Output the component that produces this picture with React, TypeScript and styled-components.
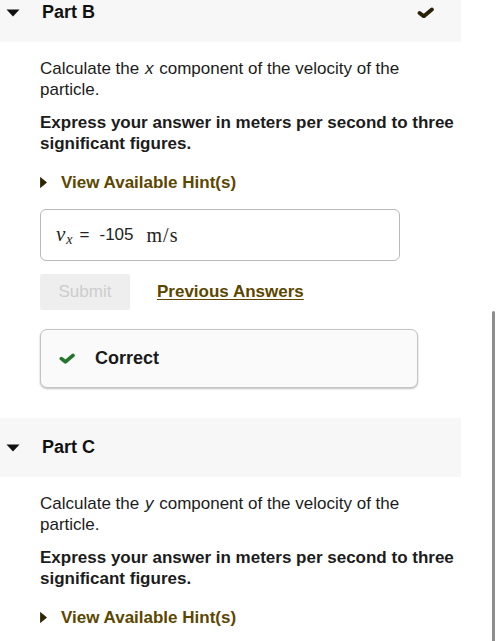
import React from "react";
import styled, { createGlobalStyle } from "styled-components";

const Global = createGlobalStyle`
  html, body { margin: 0; padding: 0; background: #fff; }
  body { font-family: "Liberation Sans", Arial, Helvetica, sans-serif; color: #1a1a1a; overflow: hidden; }
`;

const Page = styled.div`
  width: 461px;
  margin-top: -17px;
`;

const Section = styled.section`
  display: flex;
  flex-direction: column;
`;

const PartHeader = styled.div`
  height: 59px;
  background: #f7f7f7;
  display: flex;
  align-items: center;
  padding: 0 27px 0 6px;
  box-sizing: border-box;
`;

const Caret = styled.svg`
  width: 14px;
  height: 8px;
  flex: none;
`;

const PartTitle = styled.h2`
  margin: 0 0 0 22px;
  font-size: 18px;
  font-weight: bold;
  color: #111;
  flex: 1;
`;

const Body = styled.div`
  padding: 17px 0 30px 40px;
  display: flex;
  flex-direction: column;
  align-items: flex-start;
`;

const Para = styled.p<{ $bold?: boolean }>`
  margin: 0;
  font-size: 17px;
  line-height: 20.5px;
  font-weight: ${(p) => (p.$bold ? "bold" : "normal")};
  color: #1c1c1c;
  width: 418px;
  & + & { margin-top: 13px; }
`;

const Em = styled.em`
  font-style: italic;
  margin: 0 1px;
`;

const HintRow = styled.div`
  margin-top: 18px;
  display: flex;
  align-items: center;
  height: 21px;
`;

const HintArrow = styled.svg`
  width: 7px;
  height: 11px;
  margin-right: 14px;
`;

const HintText = styled.span`
  font-size: 17px;
  font-weight: bold;
  color: #5c4700;
`;

const AnswerBox = styled.div`
  margin-top: 16px;
  width: 360px;
  height: 52px;
  box-sizing: border-box;
  border: 1px solid #b9b9b9;
  border-radius: 6px;
  display: flex;
  align-items: center;
  padding-left: 15px;
  font-size: 17px;
  color: #222;
`;

const MathVar = styled.span`
  font-family: "Liberation Serif", "Times New Roman", serif;
  font-style: italic;
  font-size: 21px;
  sub { font-size: 14px; font-style: italic; vertical-align: -3px; margin-left: 1px; }
`;

const Equals = styled.span`
  margin: 0 10px 0 7px;
`;

const Unit = styled.span`
  font-family: "Liberation Serif", "Times New Roman", serif;
  font-size: 20px;
  letter-spacing: 1px;
  margin-left: 13px;
`;

const ActionRow = styled.div`
  margin-top: 13px;
  display: flex;
  align-items: center;
`;

const SubmitButton = styled.button`
  width: 90px;
  height: 36px;
  border: none;
  border-radius: 2px;
  background: #eeeeee;
  color: #cdcdcd;
  font-family: "Liberation Sans", Arial, sans-serif;
  font-size: 17px;
  padding: 0;
`;

const PrevLink = styled.a`
  margin-left: 27px;
  margin-top: -1px;
  font-size: 17px;
  font-weight: bold;
  color: #5c4700;
  text-decoration: underline;
  text-underline-offset: 2px;
`;

const Feedback = styled.div`
  margin-top: 19px;
  width: 378px;
  height: 59px;
  box-sizing: border-box;
  border: 1px solid #c4c4c4;
  border-radius: 7px;
  background: #fafafa;
  box-shadow: 0 1px 2px rgba(0, 0, 0, 0.25);
  display: flex;
  align-items: center;
  padding-left: 18px;
`;

const FeedbackText = styled.span`
  margin-left: 20px;
  font-size: 18px;
  font-weight: bold;
  color: #1a1a1a;
`;

const ScrollThumb = styled.div`
  position: fixed;
  left: 492px;
  top: 311px;
  width: 3px;
  height: 340px;
  border-radius: 2px;
  background: #8d8d8d;
`;

const Check = ({ color, w = 14 }: { color: string; w?: number }) => (
  <svg width={w} height={w * 0.7} viewBox="0 0 20 14" style={{ flex: "none" }}>
    <path d="M3 7 L8 11 L17.5 3" fill="none" stroke={color} strokeWidth="4.6" strokeLinecap="round" strokeLinejoin="round" />
  </svg>
);

const DownCaret = () => (
  <Caret viewBox="0 0 14 8">
    <path d="M0.5 0.5 H13.5 L7 7.5 Z" fill="#111" />
  </Caret>
);

const Hint = () => (
  <HintRow>
    <HintArrow viewBox="0 0 7 11">
      <path d="M0.5 0.5 L6.5 5.5 L0.5 10.5 Z" fill="#2f2400" stroke="#2f2400" strokeWidth="0.8" strokeLinejoin="round" />
    </HintArrow>
    <HintText>View Available Hint(s)</HintText>
  </HintRow>
);

export default function App() {
  return (
    <>
      <Global />
      <Page>
        <Section>
          <PartHeader>
            <DownCaret />
            <PartTitle>Part B</PartTitle>
            <Check color="#2a2108" w={17} />
          </PartHeader>
          <Body>
            <Para>
              Calculate the <Em>x</Em> component of the velocity of the particle.
            </Para>
            <Para $bold>Express your answer in meters per second to three significant figures.</Para>
            <Hint />
            <AnswerBox>
              <MathVar>
                v<sub>x</sub>
              </MathVar>
              <Equals>=</Equals>
              <span>-105</span>
              <Unit>m/s</Unit>
            </AnswerBox>
            <ActionRow>
              <SubmitButton disabled>Submit</SubmitButton>
              <PrevLink>Previous Answers</PrevLink>
            </ActionRow>
            <Feedback>
              <Check color="#23752b" w={16} />
              <FeedbackText>Correct</FeedbackText>
            </Feedback>
          </Body>
        </Section>
        <Section>
          <PartHeader>
            <DownCaret />
            <PartTitle>Part C</PartTitle>
          </PartHeader>
          <Body>
            <Para>
              Calculate the <Em>y</Em> component of the velocity of the particle.
            </Para>
            <Para $bold>Express your answer in meters per second to three significant figures.</Para>
            <Hint />
          </Body>
        </Section>
      </Page>
      <ScrollThumb />
    </>
  );
}
